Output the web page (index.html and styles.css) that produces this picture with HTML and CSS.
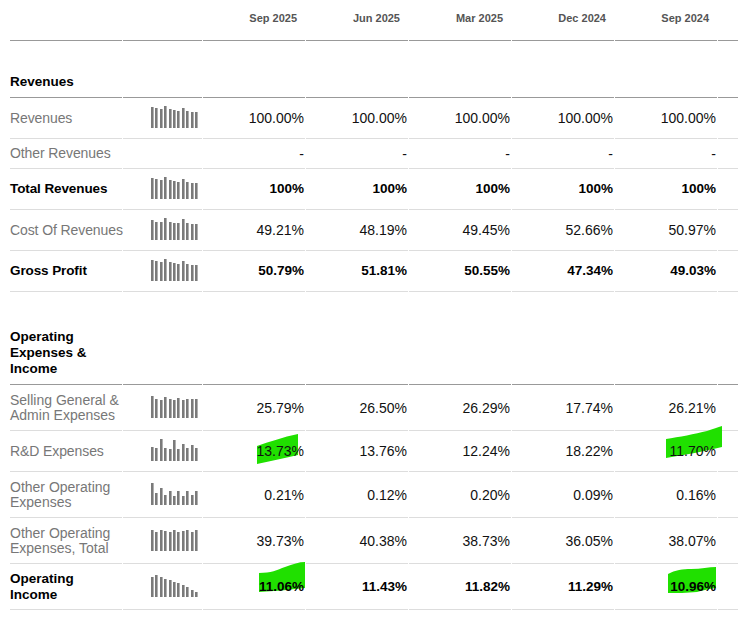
FILE: index.html
```html
<!DOCTYPE html>
<html>
<head>
<meta charset="utf-8">
<link rel="stylesheet" href="styles.css">
</head>
<body>
<table class="fin">
  <colgroup>
    <col class="c-lab"><col class="c-spark"><col class="c-val"><col class="c-val"><col class="c-val"><col class="c-val"><col class="c-val"><col class="c-pad">
  </colgroup>
  <thead>
    <tr class="head">
      <th></th><th></th><th>Sep 2025</th><th>Jun 2025</th><th>Mar 2025</th><th>Dec 2024</th><th>Sep 2024</th><th></th>
    </tr>
  </thead>
  <tbody>
    <tr class="section s1">
      <td class="lab">Revenues</td><td></td><td></td><td></td><td></td><td></td><td></td><td></td>
    </tr>
    <tr class="row h41">
      <td class="lab one">Revenues</td>
      <td class="spark"><div class="bars"><i style="height:21px"></i><i style="height:20px"></i><i style="height:19px"></i><i style="height:22px"></i><i style="height:19px"></i><i style="height:18px"></i><i style="height:17px"></i><i style="height:20px"></i><i style="height:17px"></i><i style="height:16px"></i><i style="height:16px"></i></div></td>
      <td class="val">100.00%</td><td class="val">100.00%</td><td class="val">100.00%</td><td class="val">100.00%</td><td class="val">100.00%</td><td></td>
    </tr>
    <tr class="row h30">
      <td class="lab one">Other Revenues</td><td></td>
      <td class="val">-</td><td class="val">-</td><td class="val">-</td><td class="val">-</td><td class="val">-</td><td></td>
    </tr>
    <tr class="row h41 total">
      <td class="lab one">Total Revenues</td>
      <td class="spark"><div class="bars"><i style="height:21px"></i><i style="height:20px"></i><i style="height:19px"></i><i style="height:22px"></i><i style="height:19px"></i><i style="height:18px"></i><i style="height:17px"></i><i style="height:20px"></i><i style="height:17px"></i><i style="height:16px"></i><i style="height:16px"></i></div></td>
      <td class="val">100%</td><td class="val">100%</td><td class="val">100%</td><td class="val">100%</td><td class="val">100%</td><td></td>
    </tr>
    <tr class="row h41">
      <td class="lab one">Cost Of Revenues</td>
      <td class="spark"><div class="bars"><i style="height:20px"></i><i style="height:18px"></i><i style="height:18px"></i><i style="height:22px"></i><i style="height:18px"></i><i style="height:17px"></i><i style="height:17px"></i><i style="height:21px"></i><i style="height:17px"></i><i style="height:16px"></i><i style="height:16px"></i></div></td>
      <td class="val">49.21%</td><td class="val">48.19%</td><td class="val">49.45%</td><td class="val">52.66%</td><td class="val">50.97%</td><td></td>
    </tr>
    <tr class="row h41 total">
      <td class="lab one">Gross Profit</td>
      <td class="spark"><div class="bars"><i style="height:21px"></i><i style="height:20px"></i><i style="height:19px"></i><i style="height:22px"></i><i style="height:19px"></i><i style="height:18px"></i><i style="height:17px"></i><i style="height:20px"></i><i style="height:17px"></i><i style="height:16px"></i><i style="height:16px"></i></div></td>
      <td class="val">50.79%</td><td class="val">51.81%</td><td class="val">50.55%</td><td class="val">47.34%</td><td class="val">49.03%</td><td></td>
    </tr>
    <tr class="section s2">
      <td class="lab">Operating Expenses &amp; Income</td><td></td><td></td><td></td><td></td><td></td><td></td><td></td>
    </tr>
    <tr class="row h46">
      <td class="lab two">Selling General &amp; Admin Expenses</td>
      <td class="spark"><div class="bars"><i style="height:22px"></i><i style="height:19px"></i><i style="height:18px"></i><i style="height:21px"></i><i style="height:19px"></i><i style="height:18px"></i><i style="height:20px"></i><i style="height:18px"></i><i style="height:19px"></i><i style="height:19px"></i><i style="height:19px"></i></div></td>
      <td class="val">25.79%</td><td class="val">26.50%</td><td class="val">26.29%</td><td class="val">17.74%</td><td class="val">26.21%</td><td></td>
    </tr>
    <tr class="row h41">
      <td class="lab one">R&amp;D Expenses</td>
      <td class="spark"><div class="bars"><i style="height:14px"></i><i style="height:13px"></i><i style="height:22px"></i><i style="height:13px"></i><i style="height:12px"></i><i style="height:21px"></i><i style="height:12px"></i><i style="height:17px"></i><i style="height:13px"></i><i style="height:16px"></i><i style="height:13px"></i></div></td>
      <td class="val mark">
        <svg class="hl" width="102" height="40" viewBox="0 0 102 40"><path d="M54 15 C66 11 80 6 95 3 L95 24 C82 27 68 30 54 33 Z"/></svg>
        <span>13.73%</span>
      </td>
      <td class="val">13.76%</td><td class="val">12.24%</td><td class="val">18.22%</td>
      <td class="val mark">
        <svg class="hl" width="102" height="40" viewBox="0 0 102 40"><path d="M51 8 C64 6 80 3 92 0 C98 -2 103 -4 107 -5 L107 16 C90 20 70 24 51 27 Z"/></svg>
        <span>11.70%</span>
      </td>
      <td></td>
    </tr>
    <tr class="row h46">
      <td class="lab two">Other Operating Expenses</td>
      <td class="spark"><div class="bars"><i style="height:22px"></i><i style="height:12px"></i><i style="height:17px"></i><i style="height:10px"></i><i style="height:14px"></i><i style="height:9px"></i><i style="height:14px"></i><i style="height:9px"></i><i style="height:14px"></i><i style="height:10px"></i><i style="height:14px"></i></div></td>
      <td class="val">0.21%</td><td class="val">0.12%</td><td class="val">0.20%</td><td class="val">0.09%</td><td class="val">0.16%</td><td></td>
    </tr>
    <tr class="row h46">
      <td class="lab two">Other Operating Expenses, Total</td>
      <td class="spark"><div class="bars"><i style="height:21px"></i><i style="height:19px"></i><i style="height:21px"></i><i style="height:20px"></i><i style="height:19px"></i><i style="height:21px"></i><i style="height:19px"></i><i style="height:20px"></i><i style="height:21px"></i><i style="height:19px"></i><i style="height:21px"></i></div></td>
      <td class="val">39.73%</td><td class="val">40.38%</td><td class="val">38.73%</td><td class="val">36.05%</td><td class="val">38.07%</td><td></td>
    </tr>
    <tr class="row h46 total">
      <td class="lab two">Operating<br>Income</td>
      <td class="spark"><div class="bars"><i style="height:20px"></i><i style="height:22px"></i><i style="height:20px"></i><i style="height:18px"></i><i style="height:17px"></i><i style="height:15px"></i><i style="height:14px"></i><i style="height:12px"></i><i style="height:10px"></i><i style="height:7px"></i><i style="height:5px"></i></div></td>
      <td class="val mark">
        <svg class="hl" width="102" height="46" viewBox="0 0 102 46"><path d="M56 9 C68 9 74 6 82 3 C90 0 96 -2 102 -2 L102 24 C86 26 70 27 56 28 Z"/></svg>
        <span>11.06%</span>
      </td>
      <td class="val">11.43%</td><td class="val">11.82%</td><td class="val">11.29%</td>
      <td class="val mark">
        <svg class="hl" width="102" height="46" viewBox="0 0 102 46"><path d="M53 10 C60 6 68 5 76 5 C86 5 94 3 101 3 L101 24 C94 25 88 26 82 28 C72 29 62 29 53 29 Z"/></svg>
        <span>10.96%</span>
      </td>
      <td></td>
    </tr>
  </tbody>
</table>
</body>
</html>
```

FILE: styles.css
```css
html, body {
  margin: 0;
  padding: 0;
  background: #fff;
  overflow: hidden;
}

body {
  font-family: "Liberation Sans", Arial, sans-serif;
  color: #111;
}

.fin {
  margin-left: 9px;
  width: 730px;
  table-layout: fixed;
  border-collapse: separate;
  border-spacing: 1px 0;
}

.c-lab { width: 112px; }
.c-spark { width: 79px; }
.c-val { width: 102px; }
.c-pad { width: 20px; }

.fin th,
.fin td {
  box-sizing: border-box;
  padding: 0;
}

.fin .head th {
  height: 41px;
  padding: 11px 8px 0 0;
  vertical-align: top;
  text-align: right;
  font-size: 11px;
  line-height: 14px;
  font-weight: bold;
  color: #555;
  border-bottom: 1px solid #999;
}

.fin .section td {
  vertical-align: bottom;
  padding-bottom: 7px;
  border-bottom: 1px solid #999;
}

.fin .section .lab {
  font-size: 13.5px;
  line-height: 16px;
  font-weight: bold;
  color: #000;
}

.fin .s1 td { height: 57px; }
.fin .s2 td { height: 93px; }

.fin .row td {
  vertical-align: middle;
  border-bottom: 1px solid #ddd;
}

.fin .h41 td { height: 41px; }
.fin .h30 td { height: 30px; }
.fin .h46 td { height: 46px; }

.fin .row .lab {
  font-size: 14px;
  line-height: 15px;
  color: #777;
}

.fin .row .one {
  white-space: nowrap;
  letter-spacing: -0.1px;
}

.fin .row.total .lab {
  font-size: 13.5px;
  line-height: 16px;
  font-weight: bold;
  color: #000;
}

.fin .val {
  text-align: right;
  padding-right: 1px;
  font-size: 14px;
  line-height: 16px;
  color: #111;
}

.fin .row.total .val {
  font-size: 13.5px;
  font-weight: bold;
  color: #000;
}

.fin .spark {
  padding-left: 28px;
}

.bars {
  display: flex;
  align-items: flex-end;
  gap: 1.4px;
  height: 22px;
  margin-top: -2px;
}

.bars i {
  display: block;
  width: 2px;
  background: #7a7a7a;
  border-right: 1px solid #b0b0b0;
}

.mark {
  position: relative;
}

.mark span {
  position: relative;
  z-index: 1;
}

.hl {
  position: absolute;
  left: 0;
  top: 0;
  overflow: visible;
  z-index: 0;
}

.hl path {
  fill: #20e000;
}
```
